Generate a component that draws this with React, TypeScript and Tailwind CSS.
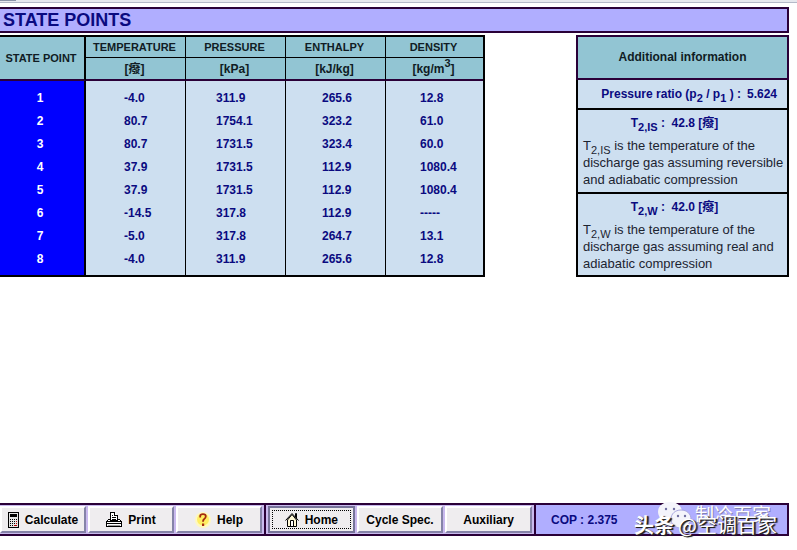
import type { ReactNode } from 'react';

const columns = [
	{
		name: 'TEMPERATURE',
		unit: '[癈]',
		pad: 'pl-[38px]',
	},
	{
		name: 'PRESSURE',
		unit: '[kPa]',
		pad: 'pl-[30px]',
	},
	{
		name: 'ENTHALPY',
		unit: '[kJ/kg]',
		pad: 'pl-9',
	},
	{
		name: 'DENSITY',
		unit: (
			<>
				[kg/m<span className="relative -top-1.5 text-[11px]">3</span>]
			</>
		),
		pad: 'pl-[34px]',
	},
];

const points = [
	['-4.0', '311.9', '265.6', '12.8'],
	['80.7', '1754.1', '323.2', '61.0'],
	['80.7', '1731.5', '323.4', '60.0'],
	['37.9', '1731.5', '112.9', '1080.4'],
	['37.9', '1731.5', '112.9', '1080.4'],
	['-14.5', '317.8', '112.9', '-----'],
	['-5.0', '317.8', '264.7', '13.1'],
	['-4.0', '311.9', '265.6', '12.8'],
];

const Sub = ({ children }: { children: ReactNode }) => (
	<span className="relative top-1 text-[11px] leading-none">{children}</span>
);

const CalculatorIcon = () => (
	<svg width="11" height="16" viewBox="0 0 11 16" shapeRendering="crispEdges">
		<rect x="0.5" y="0.5" width="10" height="15" fill="#e4e4e4" stroke="#000" />
		<rect x="2" y="2" width="7" height="3" fill="#000" />
		<path
			d="M2 7h1v1h-1zM4 7h1v1h-1zM6 7h1v1h-1zM8 7h1v1h-1zM2 9h1v1h-1zM4 9h1v1h-1zM6 9h1v1h-1zM2 11h1v1h-1zM4 11h1v1h-1zM6 11h1v1h-1zM2 13h1v1h-1zM4 13h1v1h-1z"
			fill="#000"
		/>
		<path d="M8 9h1v1h-1zM8 11h1v1h-1zM6 13h3v1h-3z" fill="#b00000" />
	</svg>
);

const PrinterIcon = () => (
	<svg width="16" height="16" viewBox="0 0 16 16" shapeRendering="crispEdges" fill="#fff" stroke="#000">
		<path d="M2.5 7.5h11l2 3v4h-15v-4z" />
		<path d="M4.5 8.5v-8h4l3 3v5z" />
		<path d="M8.5 0.5v3h3M6 3.5h1M6 5.5h4M6 7.5h4" />
		<path d="M0.5 9.5h15v2h-15zM0.5 14.5h15" />
		<path d="M2 13.5h12" stroke="#999" />
	</svg>
);

const HelpIcon = () => (
	<svg width="16" height="16" viewBox="0 0 16 16">
		<circle cx="8" cy="8" r="8" fill="#fff8bd" />
		<circle cx="8" cy="7.5" r="6" fill="#ffee62" />
		<path d="M5.2 5.5V4Q5.2 2.2 8 2.2t2.8 2Q10.8 6 9 7.2 8 8 8 9.8" fill="none" stroke="#a52a12" strokeWidth="1.8" />
		<rect x="7" y="11.5" width="2.2" height="2.5" fill="#a52a12" />
	</svg>
);

const HomeIcon = () => (
	<svg width="14" height="15" viewBox="0 0 14 15" fill="none" stroke="#000">
		<path d="M2.5 8v6.5h9V8L7 2.5z" fill="#fff8d5" />
		<path d="M0.5 8.5L7 1.5l6.5 7M10.5 5V1.5h1v5" />
		<path d="M5.5 14V8.5h3V14" fill="#fff" />
	</svg>
);

type ToolButtonProps = {
	label: string;
	icon?: ReactNode;
	active?: boolean;
};

const ToolButton = ({ label, icon, active }: ToolButtonProps) => (
	<button
		className={`flex-1 h-[27px] p-[3px] bg-[#efedef] border-2 text-xs font-bold text-black whitespace-nowrap ${
			active ? 'border-[#77749a]' : 'border-t-white border-l-white border-b-[#8583a8] border-r-[#8583a8]'
		}`}
	>
		<span
			className={`flex h-full items-center justify-center gap-1.5 ${
				active ? 'outline-1 outline-dotted outline-black' : ''
			}`}
		>
			{icon}
			{label}
		</span>
	</button>
);

const SpacerRow = () => (
	<tr className="h-[5px]">
		<td className="p-0 bg-[#0000ff] border-r-2 border-black"></td>
		{columns.map((c) => (
			<td key={c.name} className="p-0 border-r border-black last:border-r-0"></td>
		))}
	</tr>
);

const StateTable = () => (
	<table className="w-[485px] table-fixed border-separate border-spacing-0 border-y-2 border-r-2 border-black text-xs font-bold">
		<colgroup>
			<col className="w-[86px]" />
			<col className="w-[100px]" />
			<col className="w-[100px]" />
			<col className="w-[100px]" />
			<col />
		</colgroup>
		<thead className="bg-[#92c5d3] text-[11px] text-[#101c24]">
			<tr className="h-[21px]">
				<th rowSpan={2} className="p-0 pr-0.5 border-r-2 border-b-2 border-black border-b-[#2a0038]">
					STATE POINT
				</th>
				{columns.map((c) => (
					<th key={c.name} className="p-0 pr-0.5 border-r border-b border-black last:border-r-0">
						{c.name}
					</th>
				))}
			</tr>
			<tr className="h-[23px] text-xs">
				{columns.map((c) => (
					<th key={c.name} className="p-0 pr-0.5 border-r border-b-2 border-black border-b-[#2a0038] last:border-r-0">
						{c.unit}
					</th>
				))}
			</tr>
		</thead>
		<tbody className="bg-[#cddff0] text-[#0a0a80]">
			<SpacerRow />
			{points.map((row, i) => (
				<tr key={i} className="h-[23px]">
					<th className="p-0 pr-1 bg-[#0000ff] border-r-2 border-black text-white">{i + 1}</th>
					{row.map((v, j) => (
						<td key={j} className={`p-0 border-r border-black last:border-r-0 ${columns[j].pad}`}>
							{v}
						</td>
					))}
				</tr>
			))}
			<SpacerRow />
		</tbody>
	</table>
);

const InfoPanel = () => (
	<section className="w-[213px] border-2 border-black bg-[#cddff0] text-xs">
		<h2 className="-mx-0.5 -mt-0.5 flex h-[45px] items-center justify-center border-2 border-[#2a0038] bg-[#92c5d3] pb-0.5 font-bold text-[#101c24]">
			Additional information
		</h2>
		<p className="flex h-[30px] items-center justify-end gap-1.5 border-b-2 border-black pr-2.5 font-bold text-[#0a0a80]">
			<span>
				Pressure ratio (p<Sub>2</Sub> / p<Sub>1</Sub> ) :
			</span>
			<span>5.624</span>
		</p>
		<div className="h-[84px] border-b-2 border-black pt-1">
			<p className="pr-4 text-center font-bold leading-[18px] text-[#0a0a80]">
				T<Sub>2,IS</Sub> :&nbsp; 42.8 [癈]
			</p>
			<p className="pt-[5px] pl-[5px] text-[13px] leading-[17px] text-[#1c2430]">
				T<Sub>2,IS</Sub> is the temperature of the
				<br />
				discharge gas assuming reversible
				<br />
				and adiabatic compression
			</p>
		</div>
		<div className="h-[81px] pt-1">
			<p className="pr-4 text-center font-bold leading-[18px] text-[#0a0a80]">
				T<Sub>2,W</Sub> :&nbsp; 42.0 [癈]
			</p>
			<p className="pt-[5px] pl-[5px] text-[13px] leading-[17px] text-[#1c2430]">
				T<Sub>2,W</Sub> is the temperature of the
				<br />
				discharge gas assuming real and
				<br />
				adiabatic compression
			</p>
		</div>
	</section>
);

const Watermark = () => (
	<div className="pointer-events-none absolute top-0 right-0 h-full w-[160px] font-['Noto_Sans_CJK_SC',sans-serif] whitespace-nowrap">
		<svg className="absolute -top-1 left-[31px]" width="34" height="30" viewBox="0 0 34 30">
			<path d="M12 1C5 1 0 5 0 11c0 3 2 6 4 8l-1 4 5-2q2 1 5 1 10-1 11-11C24 5 19 1 12 1z" fill="#f4f4fb" />
			<path
				d="M23 9c-6 0-10 4-10 9s4 9 10 9l3-1 4 2-1-4c3-2 4-4 4-6 0-5-4-9-10-9z"
				fill="#f4f4fb"
				stroke="#aaa8e0"
			/>
			<g fill="#6f6da0">
				<circle cx="8" cy="8" r="1.2" />
				<circle cx="16" cy="8" r="1.2" />
				<circle cx="20" cy="15" r="1.2" />
				<circle cx="27" cy="15" r="1.2" />
			</g>
		</svg>
		<span className="absolute -top-0.5 left-[68px] text-[19px] leading-[22px] text-white [text-shadow:1px_1px_0_#8583b0]">
			制冷百家
		</span>
		<div className="absolute top-2 left-[7px] flex gap-1 text-[20px] leading-[24px] text-white [text-shadow:1px_1px_0_#222,2px_1px_1px_#222]">
			<span className="font-bold">头条</span>
			<span>@空调百家</span>
		</div>
	</div>
);

const App = () => (
	<main className="flex min-h-screen flex-col bg-white pb-3.5 font-['Liberation_Sans','Noto_Sans_CJK_SC',sans-serif]">
		<div className="h-[3px] border-b border-[#b4b9c8] bg-[#e6e8ee]">
			<div className="h-px w-4 bg-[#8a93a8]"></div>
		</div>

		<h1 className="mt-1 mr-2 h-[26px] border-y-2 border-r-2 border-[#2a0038] bg-[#b0aeff] pl-[3px] text-lg font-bold leading-[23px] text-[#0a0a80]">
			STATE POINTS
		</h1>

		<div className="mt-0.5 mr-2 flex items-start justify-between">
			<StateTable />
			<InfoPanel />
		</div>

		<footer className="relative mt-auto mr-2 flex h-[33px] border-y-2 border-r-2 border-[#2a0038] bg-[#b0aeff]">
			<div className="flex w-[266px] shrink-0 items-center gap-0.5 border-r-2 border-[#2a0038] bg-[#c9b9ee] pr-0.5">
				<ToolButton label="Calculate" icon={<CalculatorIcon />} />
				<ToolButton label="Print" icon={<PrinterIcon />} />
				<ToolButton label="Help" icon={<HelpIcon />} />
			</div>
			<div className="flex w-[270px] shrink-0 items-center gap-0.5 border-r-2 border-[#2a0038] bg-[#c9b9ee] px-0.5">
				<ToolButton label="Home" icon={<HomeIcon />} active />
				<ToolButton label="Cycle Spec." />
				<ToolButton label="Auxiliary" />
			</div>
			<p className="self-center pl-[15px] text-xs font-bold text-[#0a0a80]">COP : 2.375</p>
			<Watermark />
		</footer>
	</main>
);

export default App;
